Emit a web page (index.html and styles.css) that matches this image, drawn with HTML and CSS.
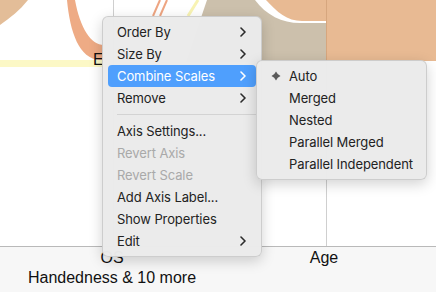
FILE: index.html
```html
<!DOCTYPE html>
<html lang="en">
<head>
    <meta charset="UTF-8">
    <meta name="viewport" content="width=device-width, initial-scale=1.0">
    <title>Parallel Sets</title>
    <link rel="stylesheet" href="styles.css">
</head>
<body>
    <div class="view">
        <div class="chart">
            <svg class="ribbons" width="436" height="246" viewBox="0 0 436 246">
                <!-- ribbons -->
                <path d="M0,0 L28,0 C20,10 10,18 0,25 Z" fill="#e3bd98"/>
                <path d="M67,0 C70,32 79,59 100,60 L104,60 L104,45 C91,45 80,28 75,0 Z" fill="#eeab85"/>
                <rect x="0" y="60" width="104" height="7" fill="#fcf8c6"/>
                <path d="M160,0 L153,16" stroke="#eea582" stroke-width="2" fill="none"/>
                <path d="M167,0 L160,16" stroke="#eea582" stroke-width="2" fill="none"/>
                <path d="M198,0 L188,16" stroke="#f8f3b4" stroke-width="3" fill="none"/>
                <path d="M207,0 L326,0 L326,62 L186,62 Z" fill="#ccc0ac"/>
                <path d="M255,0 C266,15 282,23 300,23 L326,23 L326,0 Z" fill="#ffffff"/>
                <path d="M266,0 C277,12 287,21 302,21 L326,21 L326,0 Z" fill="#e8ba93"/>
                <rect x="326" y="0" width="110" height="61" fill="#e8ba93"/>
                <!-- axes -->
                <line x1="113.5" y1="0" x2="113.5" y2="246" stroke="#cfcfcf"/>
                <line x1="326.5" y1="0" x2="326.5" y2="246" stroke="#cfcfcf"/>
                <line x1="326.5" y1="0" x2="326.5" y2="61" stroke="#d6a67e"/>
                <text x="93" y="65" class="cat-label">E</text>
            </svg>
        </div>
        <div class="axis-labels">
            <div class="axis axis-os">
                <span class="axis-name">OS</span>
                <span class="axis-name">Handedness &amp; 10 more</span>
            </div>
            <div class="axis axis-age">
                <span class="axis-name">Age</span>
            </div>
        </div>

        <!-- Context menu -->
        <div class="menu main-menu">
            <div class="menu-item has-sub">Order By
                <svg class="chevron" width="6" height="10" viewBox="0 0 6 10"><path d="M1,1 L5,5 L1,9"/></svg>
            </div>
            <div class="menu-item has-sub">Size By
                <svg class="chevron" width="6" height="10" viewBox="0 0 6 10"><path d="M1,1 L5,5 L1,9"/></svg>
            </div>
            <div class="menu-item has-sub active">Combine Scales
                <svg class="chevron" width="6" height="10" viewBox="0 0 6 10"><path d="M1,1 L5,5 L1,9"/></svg>
            </div>
            <div class="menu-item has-sub">Remove
                <svg class="chevron" width="6" height="10" viewBox="0 0 6 10"><path d="M1,1 L5,5 L1,9"/></svg>
            </div>
            <div class="menu-sep"></div>
            <div class="menu-item">Axis Settings...</div>
            <div class="menu-item disabled">Revert Axis</div>
            <div class="menu-item disabled">Revert Scale</div>
            <div class="menu-item">Add Axis Label...</div>
            <div class="menu-item">Show Properties</div>
            <div class="menu-item has-sub">Edit
                <svg class="chevron" width="6" height="10" viewBox="0 0 6 10"><path d="M1,1 L5,5 L1,9"/></svg>
            </div>
        </div>

        <!-- Combine Scales submenu -->
        <div class="menu sub-menu">
            <div class="menu-item checked">
                <svg class="mark" width="10" height="10" viewBox="0 0 10 10"><path d="M5,0.5 Q6.4,3.6 9.5,5 Q6.4,6.4 5,9.5 Q3.6,6.4 0.5,5 Q3.6,3.6 5,0.5 Z"/></svg>
                Auto
            </div>
            <div class="menu-item">Merged</div>
            <div class="menu-item">Nested</div>
            <div class="menu-item">Parallel Merged</div>
            <div class="menu-item">Parallel Independent</div>
        </div>
    </div>
</body>
</html>
```
FILE: styles.css
```css
body {
    margin: 0;
    font-family: "Liberation Sans", Arial, sans-serif;
    background-color: #f7f7f7;
}
.view {
    position: relative;
    width: 436px;
    height: 292px;
    overflow: hidden;
}
.chart {
    height: 246px;
    background-color: #fff;
    border-bottom: 1px solid #b9b9b9;
}
.ribbons {
    display: block;
}
.cat-label {
    font-family: "Liberation Sans", Arial, sans-serif;
    font-size: 16px;
    fill: #111;
}
.axis-labels {
    display: flex;
}
.axis {
    display: flex;
    flex-direction: column;
    align-items: center;
    font-size: 16px;
    line-height: 20px;
    color: #111;
    padding-top: 1px;
}
.axis-os {
    width: 224px;
}
.axis-age {
    width: 200px;
}

/* menus */
.menu {
    position: absolute;
    box-sizing: border-box;
    background-color: rgba(235, 235, 235, 0.98);
    border: 1px solid rgba(0, 0, 0, 0.13);
    border-radius: 6px;
    box-shadow: 0 4px 14px rgba(0, 0, 0, 0.18);
    padding: 4px 5px;
    font-family: Inter, "Noto Sans", sans-serif;
    font-size: 13px;
    letter-spacing: -0.1px;
    color: #222;
}
.main-menu {
    left: 102px;
    top: 16px;
    width: 160px;
}
.sub-menu {
    left: 256px;
    top: 60px;
    width: 171px;
}
.menu-item {
    position: relative;
    display: flex;
    align-items: center;
    height: 22px;
    padding-left: 9px;
    border-radius: 4px;
}
.sub-menu .menu-item {
    padding-left: 27px;
}
.menu-item.active {
    background-color: #4f9ffd;
    color: #fff;
}
.menu-item.disabled {
    color: #a9a9a9;
}
.chevron {
    position: absolute;
    right: 10px;
    top: 6px;
    fill: none;
    stroke: #2b2b2b;
    stroke-width: 1.6;
    stroke-linecap: round;
    stroke-linejoin: round;
}
.menu-item.active .chevron {
    stroke: #fff;
}
.mark {
    position: absolute;
    left: 9px;
    top: 6px;
    fill: #5a5a5a;
}
.menu-sep {
    height: 1px;
    margin: 5px 0 5px 9px;
    background-color: #d3d3d3;
}
```
